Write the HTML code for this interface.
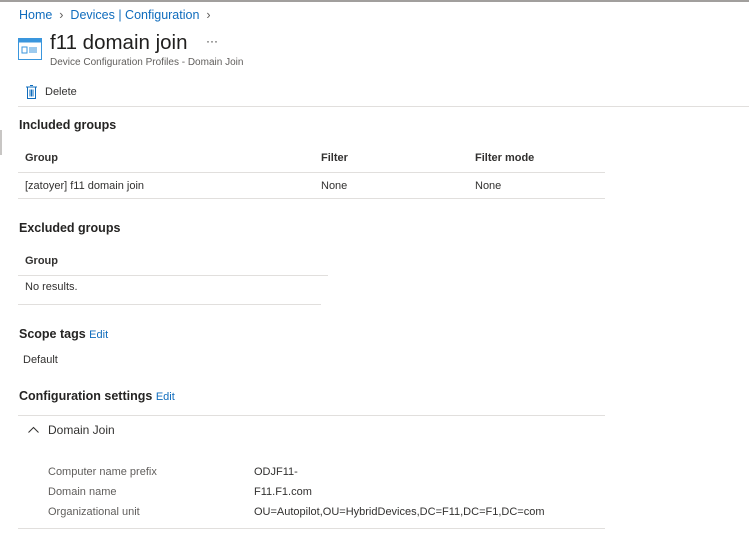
<!DOCTYPE html>
<html><head><style>
body{margin:0;width:749px;height:538px;background:#fff;font-family:"Liberation Sans",sans-serif;color:#323130;position:relative;overflow:hidden;font-size:11px}
.a{position:absolute;white-space:nowrap}
.l{position:absolute;height:1px;background:#e1dfdd}
.b{color:#0f6cbd}
.h{font-size:12.5px;font-weight:bold;color:#252423}
.g{color:#605e5c}
</style></head><body>
<div class="a" style="left:0;top:0;width:749px;height:2px;background:#a19f9d"></div>
<div class="a" style="left:0;top:130px;width:2px;height:25px;background:#c8c6c4"></div>
<div class="a b" style="left:19px;top:8px;font-size:12.5px">Home <span style="color:#605e5c">&nbsp;›&nbsp;</span> Devices | Configuration <span style="color:#605e5c">&nbsp;›</span></div>
<svg class="a" style="left:18px;top:38px" width="24" height="22" viewBox="0 0 24 22"><rect x="0.5" y="0.5" width="23" height="21" fill="#fff" stroke="#3a96dd"/><rect x="0.5" y="0.5" width="23" height="4" fill="#3a96dd"/><rect x="4" y="9" width="5" height="6" fill="none" stroke="#3a96dd"/><path d="M11 10h8M11 12h8M11 14h8" stroke="#3a96dd"/></svg>
<div class="a" style="left:50px;top:31px;font-size:20.5px;color:#201f1e">f11 domain join</div>
<div class="a" style="left:206px;top:34px;font-size:12px">···</div>
<div class="a g" style="left:50px;top:57px;font-size:10px">Device Configuration Profiles - Domain Join</div>
<svg class="a" style="left:26px;top:85px" width="11" height="14" viewBox="0 0 11 14"><path d="M0 2h11M4 0.5h3M1.5 2v11.5h8V2M4 4.5v7M5.5 4.5v7M7 4.5v7" stroke="#0f6cbd" fill="none"/></svg>
<div class="a" style="left:45px;top:86px">Delete</div>
<div class="l" style="left:18px;top:106px;width:731px"></div>
<div class="a h" style="left:19px;top:118px">Included groups</div>
<div class="a" style="left:25px;top:152px;font-weight:bold">Group</div>
<div class="a" style="left:321px;top:152px;font-weight:bold">Filter</div>
<div class="a" style="left:475px;top:152px;font-weight:bold">Filter mode</div>
<div class="l" style="left:18px;top:172px;width:587px"></div>
<div class="a" style="left:25px;top:180px">[zatoyer] f11 domain join</div>
<div class="a" style="left:321px;top:180px">None</div>
<div class="a" style="left:475px;top:180px">None</div>
<div class="l" style="left:18px;top:198px;width:587px"></div>
<div class="a h" style="left:19px;top:221px">Excluded groups</div>
<div class="a" style="left:25px;top:255px;font-weight:bold">Group</div>
<div class="l" style="left:18px;top:275px;width:310px"></div>
<div class="a" style="left:25px;top:281px">No results.</div>
<div class="l" style="left:18px;top:304px;width:303px"></div>
<div class="a h" style="left:19px;top:327px">Scope tags <span class="b" style="font-weight:normal;font-size:11px">Edit</span></div>
<div class="a" style="left:23px;top:354px">Default</div>
<div class="a h" style="left:19px;top:389px">Configuration settings <span class="b" style="font-weight:normal;font-size:11px">Edit</span></div>
<div class="l" style="left:18px;top:415px;width:587px"></div>
<svg class="a" style="left:28px;top:426px" width="11" height="7" viewBox="0 0 11 7"><path d="M0.5 6.5l5-5 5 5" stroke="#323130" fill="none"/></svg>
<div class="a" style="left:48px;top:423px;font-size:12px">Domain Join</div>
<div class="a g" style="left:48px;top:466px">Computer name prefix</div>
<div class="a" style="left:254px;top:466px">ODJF11-</div>
<div class="a g" style="left:48px;top:486px">Domain name</div>
<div class="a" style="left:254px;top:486px">F11.F1.com</div>
<div class="a g" style="left:48px;top:506px">Organizational unit</div>
<div class="a" style="left:254px;top:506px">OU=Autopilot,OU=HybridDevices,DC=F11,DC=F1,DC=com</div>
<div class="l" style="left:18px;top:528px;width:587px"></div>
</body></html>
